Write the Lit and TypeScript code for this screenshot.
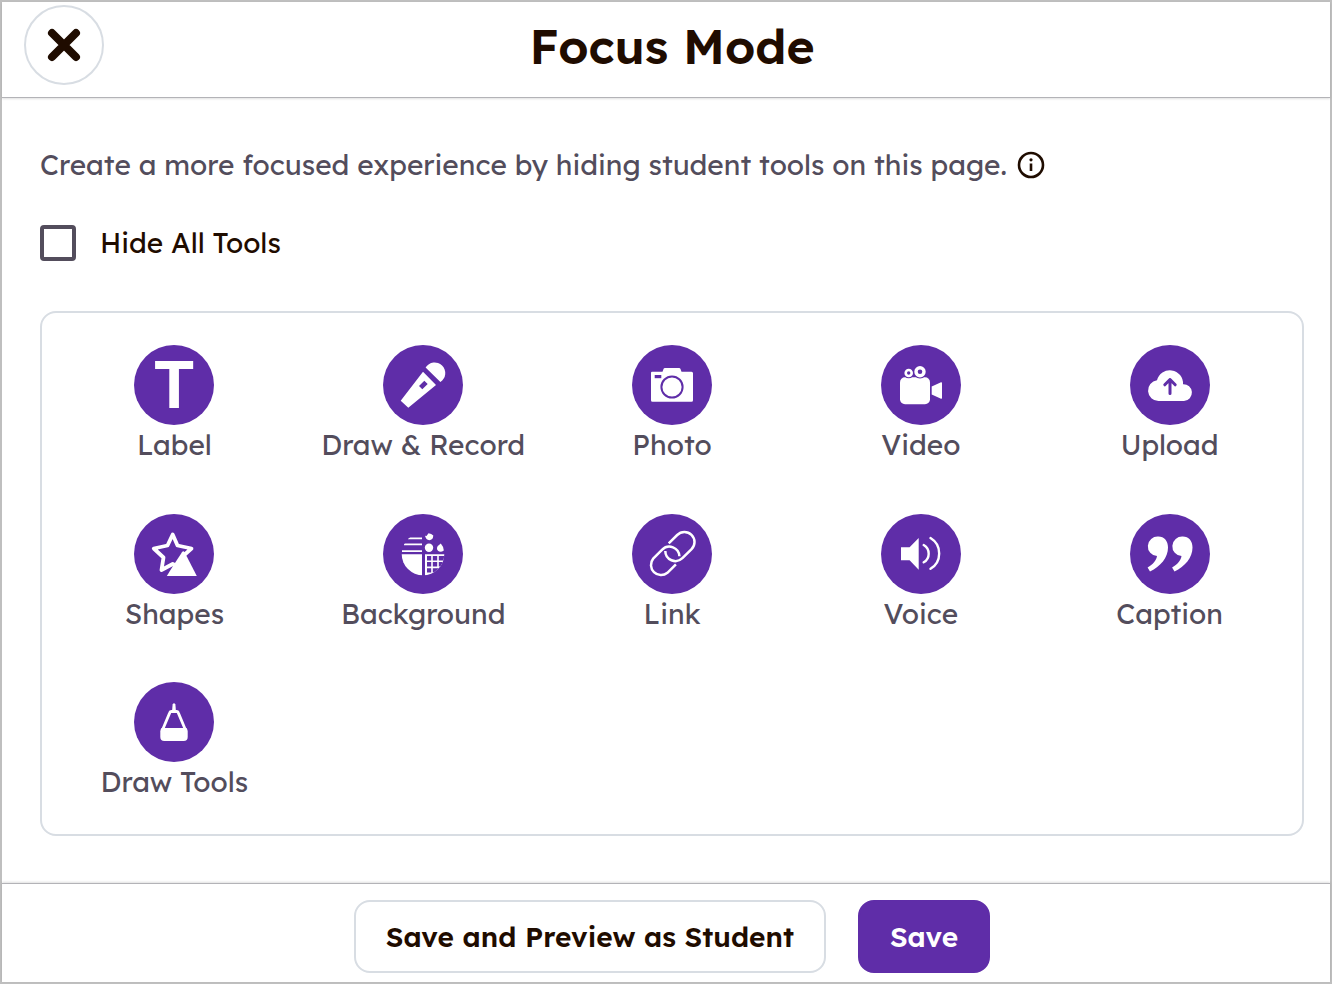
import { LitElement, html, svg, css } from "lit";
import { customElement, property } from "lit/decorators.js";

const star = "38.7,20.5 43.5,31.5 57.5,34.5 48.5,42.5 50,56 38.7,50 27.5,56 29.5,43.5 19.8,34.5 33.5,31.5";

const icons: Record<string, unknown> = {
  label: svg`<text x="40" y="63" text-anchor="middle" font-family="Inter, sans-serif" font-weight="700" font-size="64" fill="#fff">T</text>`,
  record: svg`
    <path fill="#fff" d="M42.6 22.6A10.6 10.6 0 1 1 57.4 37Z"/>
    <path fill="#fff" fill-rule="evenodd" d="M40 26.7L53 40L25.3 62.7L17.7 55.7ZM41.3 35.7L36 41L39.3 44.3L44.7 38.9Z"/>`,
  photo: svg`
    <path fill="#fff" d="M20 26.8H30.5L31.5 24Q31.8 23 33 23H47Q48.2 23 48.5 24L49.5 26.8H59.5Q61 26.8 61 28.3V55.2Q61 56.7 59.5 56.7H20.5Q19 56.7 19 55.2V28Q19 26.8 20 26.8Z"/>
    <rect class="p" x="22.7" y="30" width="6.6" height="3.2"/>
    <circle class="ps" cx="40" cy="42" r="10.6" stroke-width="2"/>`,
  video: svg`
    <rect x="19" y="32.3" width="30" height="27" rx="5" fill="#fff"/>
    <circle class="p" cx="27.7" cy="28" r="5.3"/><circle class="p" cx="39" cy="26.7" r="6.8"/>
    <circle cx="27.7" cy="28" r="3" fill="none" stroke="#fff" stroke-width="2.6"/>
    <circle cx="39" cy="26.7" r="4" fill="none" stroke="#fff" stroke-width="3.4"/>
    <path fill="#fff" d="M50.7 41.5L60 37.2Q61 37 61 38V53Q61 54 60 53.7L50.7 49.6Z"/>`,
  upload: svg`
    <path fill="#fff" d="M28.5 56A10.4 10.4 0 0 1 27 35.3A13.2 13.2 0 0 1 53 39.2A8.4 8.4 0 0 1 54 56Z"/>
    <path class="ps" stroke-width="3" stroke-linecap="round" stroke-linejoin="round" d="M40 48.5V34.5M34.8 39.8L40 34.5L45.2 39.8"/>`,
  shapes: svg`
    <polygon points=${star} fill="none" stroke="#fff" stroke-width="3.8" stroke-linejoin="round"/>
    <path fill="#fff" d="M48 38.2Q49.3 36.5 50.6 38.2L62.8 62H32.8L39 52Z"/>`,
  background: svg`
    <clipPath id="disc"><circle cx="40" cy="40" r="21.3"/></clipPath>
    <path fill="#fff" d="M42 21.8L43.5 22L45.5 19.2Q48.5 19.6 50.3 21.6Q50 26.2 46.3 26.2Q43 26 42 21.8Z"/>
    <g clip-path="url(#disc)" fill="#fff">
      <path d="M25 23.6H39V25.2H25ZM21 29.6H39V31.2H21ZM19 36.2H39V38H19ZM18 40.2H39V62H18Z"/>
      <circle cx="46" cy="33.7" r="4.2"/>
      <path d="M42 40.2H62V62H42Z"/>
      <path class="p" d="M44 42h4.2v4.4H44zM49.8 42h4.4v4.4h-4.4zM55.8 42h6v4.4h-6zM44 48h4.2v4.6H44zM49.8 48h4.4v4.6h-4.4zM55.8 48h6v4.6h-6zM44 54.2h4.2v4.4H44zM49.8 54.2h6v4.4h-6z"/>
    </g>
    <path fill="#fff" d="M57.8 29.4Q60.600 32.500 60.800 36.500Q57.500 39 55 36.800Q51.800 33.500 57.800 29.400Z"/>`,
  link: svg`
    <g fill="none" stroke="#fff" stroke-width="2.5">
      <path d="M36.7 29.4L45.2 21A10.1 10.1 0 0 1 59.6 35.2L50.4 44.2A10.1 10.1 0 0 1 33.3 37"/>
      <path d="M47.4 42.3A10.1 10.1 0 0 0 30.2 35.6L21.2 44.6A10.1 10.1 0 0 0 35.4 58.8L43.9 50.3"/>
    </g>`,
  voice: svg`
    <path fill="#fff" d="M20 33.3H28.6L37.7 24V55.8L28.6 46.2H20Z"/>
    <path fill="none" stroke="#fff" stroke-width="2.4" stroke-linecap="round" d="M42.7 31A10 10 0 0 1 42.7 48.3M49.5 24A18 18 0 0 1 49.5 54.8"/>`,
  caption: svg`
    <path id="quote" fill="#fff" d="M28.3 22.5C34.3 22.5 38 27 38 33.5C38 43.5 30.5 52.5 20 57.6L17.6 53.6C23 50.5 26.3 46.5 27 42.1A9.8 9.8 0 0 1 28.3 22.5Z"/>
    <use href="#quote" x="24.5"/>`,
  draw: svg`
    <path fill="#fff" d="M38.6 22.5Q40 20 41.400 22.500L42 30H38Z"/>
    <path fill="none" stroke="#fff" stroke-width="2.800" stroke-linejoin="round" d="M28.500 48L35.800 30.600Q36.200 29.500 37.400 29.500H42.600Q43.800 29.500 44.200 30.600L51.500 48"/>
    <path fill="#fff" d="M27.500 46H52.500Q53.700 47.500 53.700 49.500V55Q53.700 59 49.700 59H30.300Q26.300 59 26.300 55V49.500Q26.300 47.500 27.500 46Z"/>`,
};

@customElement("tool-item")
class ToolItem extends LitElement {
  @property() icon = "";
  @property() name = "";

  static styles = css`
    :host { display: block; }
    .tool {
      display: flex; flex-direction: column; align-items: center;
      width: 100%; margin: 0; padding: 0; border: 0; background: none;
      font: inherit; color: #534d5c; cursor: pointer;
    }
    .disc { width: 80px; height: 80px; display: block; }
    .name { line-height: 40px; white-space: nowrap; }
    .p { fill: #5f2da8; }
    .ps { fill: none; stroke: #5f2da8; }
  `;

  render() {
    return html`<button class="tool" type="button">
      <svg class="disc" viewBox="0 0 80 80" aria-hidden="true">
        <circle class="p" cx="40" cy="40" r="40"/>${icons[this.icon]}
      </svg>
      <span class="name">${this.name}</span>
    </button>`;
  }
}

const tools = [
  ["label", "Label"], ["record", "Draw & Record"], ["photo", "Photo"], ["video", "Video"], ["upload", "Upload"],
  ["shapes", "Shapes"], ["background", "Background"], ["link", "Link"], ["voice", "Voice"], ["caption", "Caption"],
  ["draw", "Draw Tools"],
];

@customElement("app-root")
class AppRoot extends LitElement {
  static styles = css`
    :host {
      display: flex; flex-direction: column; box-sizing: border-box; min-height: 100vh;
      border: 2px solid #bfbfbf; background: #fff; color: #1f0c00;
      font-family: Lexend, Inter, "Noto Sans", sans-serif; font-size: 28px; line-height: 36px;
    }
    .header {
      display: grid; grid-template-columns: 80px 1fr 68px; align-items: center;
      padding: 3px 22px 12px; border-bottom: 1px solid #b3b3b7; box-shadow: 0 1px 2px #0000001f;
    }
    .close {
      width: 80px; height: 80px; padding: 0; box-sizing: border-box;
      border: 2px solid #d8dde3; border-radius: 50%; background: #fff; cursor: pointer;
    }
    .close svg { display: block; width: 76px; height: 76px; }
    .title { margin: 0; padding-top: 2px; text-align: center; font-size: 48px; line-height: 60px; font-weight: 600; }
    .main { flex: 1; display: flex; flex-direction: column; padding: 49px 26px 47px 38px; }
    .intro { display: flex; align-items: center; gap: 10px; margin: 0; color: #534d5c; }
    .info { width: 28px; height: 28px; padding: 0; border: 0; background: none; cursor: pointer; }
    .info svg { display: block; }
    .all { display: flex; align-items: center; gap: 24px; margin: 42px 0 50px; align-self: flex-start; }
    .box {
      appearance: none; width: 36px; height: 36px; margin: 0; box-sizing: border-box;
      border: 4px solid #534d5c; border-radius: 4px; background: #fff;
    }
    .box:checked { background: #5f2da8; }
    .panel {
      flex: 1; display: grid; grid-template-columns: repeat(5, 1fr); align-content: space-between; row-gap: 48px;
      padding: 32px 8px; border: 2px solid #d8dde3; border-radius: 16px;
    }
    .footer {
      display: flex; justify-content: center; gap: 32px; padding: 16px 0 9px 12px;
      border-top: 1px solid #b3b3b7; box-shadow: 0 -1px 2px #0000001f;
    }
    .button {
      padding: 0 30px; border: 2px solid #d8dde3; border-radius: 16px; background: #fff; color: #1f0c00;
      font: inherit; font-weight: 600; line-height: 69px; cursor: pointer;
    }
    .primary { border-color: #5f2da8; background: #5f2da8; color: #fff; }
  `;

  render() {
    return html`
      <header class="header">
        <button class="close" type="button" aria-label="Close">
          <svg viewBox="0 0 76 76" aria-hidden="true">
            <path d="M26 26L50 50M50 26L26 50" stroke="#1f0c00" stroke-width="8" stroke-linecap="round"/>
          </svg>
        </button>
        <h1 class="title">Focus Mode</h1>
      </header>
      <main class="main">
        <p class="intro">
          <span>Create a more focused experience by hiding student tools on this page.</span>
          <button class="info" type="button" aria-label="More information">
            <svg viewBox="0 0 28 28" width="28" height="28" aria-hidden="true">
              <circle cx="14" cy="14" r="12" fill="none" stroke="#1f0c00" stroke-width="2.6"/>
              <circle cx="14" cy="8.8" r="1.6" fill="#1f0c00"/>
              <path d="M14 12.5V20" stroke="#1f0c00" stroke-width="2.6"/>
            </svg>
          </button>
        </p>
        <label class="all"><input class="box" type="checkbox" />Hide All Tools</label>
        <section class="panel" aria-label="Student tools">
          ${tools.map(([icon, name]) => html`<tool-item icon=${icon} name=${name}></tool-item>`)}
        </section>
      </main>
      <footer class="footer">
        <button class="button" type="button">Save and Preview as Student</button>
        <button class="button primary" type="button">Save</button>
      </footer>
    `;
  }
}
